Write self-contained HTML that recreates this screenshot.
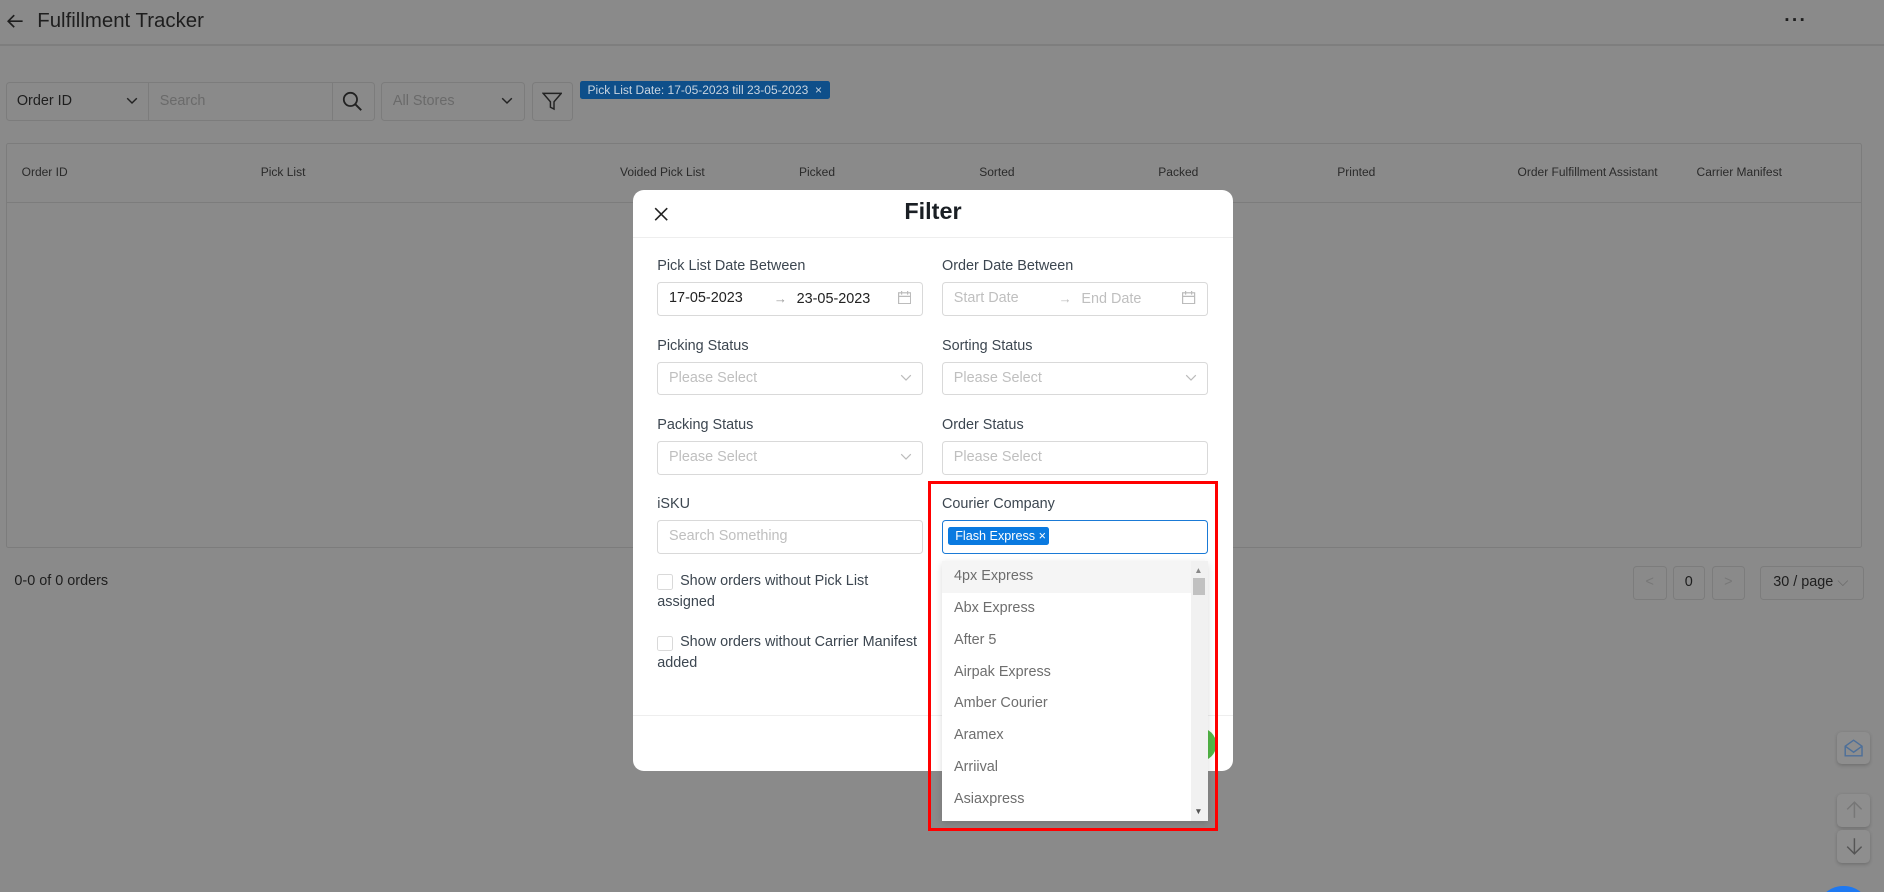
<!DOCTYPE html>
<html><head><meta charset="utf-8"><style>
html,body{margin:0;padding:0;width:1884px;height:891px;overflow:hidden;background:#8a8a8a}
#w{position:absolute;left:0;top:0;width:1568px;height:742px;overflow:hidden;zoom:1.20153;font-family:"Liberation Sans",sans-serif;color:#1e1e1e}
.a{position:absolute}
.bx{position:absolute;border:1px solid #7c7c7c;box-sizing:border-box;border-radius:3px}
.th{position:absolute;top:137px;font-size:10px;color:#2a2a2a}
.lbl{position:absolute;font-size:12px;color:#3c4650}
.in{position:absolute;border:1px solid #d9d9d9;border-radius:3px;box-sizing:border-box;height:28px;background:#fff;font-size:12px;color:#bfbfbf;padding:0 9px;line-height:26px}
.it{height:26.5px;line-height:26.5px;padding-left:10px;font-size:12px;color:#6e6e6e}
</style></head><body><div id="w">
<svg class="a" style="left:6px;top:12px" width="14" height="12" viewBox="0 0 14 12"><path d="M13 6H1.5M6 1L1 6l5 5" fill="none" stroke="#1e1e1e" stroke-width="1.4"/></svg>
<div class="a" style="left:31px;top:8px;font-size:17px;color:#1e1e1e">Fulfillment Tracker</div>
<div class="a" style="left:1485px;top:8px;font-size:16px;font-weight:bold;letter-spacing:1px">···</div>
<div class="a" style="left:0;top:37px;width:1568px;height:1px;background:#7e7e7e"></div>
<div class="bx" style="left:5px;top:68px;width:119px;height:33px;border-radius:3px 0 0 3px"></div>
<div class="a" style="left:14px;top:77px;font-size:12px">Order ID</div>
<svg class="a" style="left:105px;top:81px" width="10" height="7"><path d="M1 1l4 4 4-4" fill="none" stroke="#222" stroke-width="1.2"/></svg>
<div class="bx" style="left:123px;top:68px;width:154px;height:33px;border-radius:0"></div>
<div class="a" style="left:133px;top:77px;font-size:12px;color:#6a6a6a">Search</div>
<div class="bx" style="left:276px;top:68px;width:36px;height:33px;border-radius:0 3px 3px 0"></div>
<svg class="a" style="left:285px;top:76px" width="17" height="17"><circle cx="7" cy="7" r="5.5" fill="none" stroke="#222" stroke-width="1.5"/><path d="M11 11l5 5" stroke="#222" stroke-width="1.6"/></svg>
<div class="bx" style="left:317px;top:68px;width:120px;height:33px"></div>
<div class="a" style="left:327px;top:77px;font-size:12px;color:#6a6a6a">All Stores</div>
<svg class="a" style="left:417px;top:81px" width="10" height="7"><path d="M1 1l4 4 4-4" fill="none" stroke="#222" stroke-width="1.2"/></svg>
<div class="bx" style="left:443px;top:68px;width:34px;height:33px"></div>
<svg class="a" style="left:451px;top:76px" width="17" height="17"><path d="M1 2h15l-6 7v6l-3-1.5V9z" fill="none" stroke="#222" stroke-width="1.2"/></svg>
<div class="a" style="left:483px;top:67px;width:208px;height:15px;background:#0e4f8a;border-radius:2px;color:#c8d4e0;font-size:10px;line-height:15px;padding-left:6px;box-sizing:border-box">Pick List Date: 17-05-2023 till 23-05-2023 &nbsp;×</div>
<div class="bx" style="left:5px;top:119px;width:1545px;height:337px;border-radius:2px"></div>
<div class="a" style="left:5px;top:168px;width:1545px;height:1px;background:#7c7c7c"></div>
<div class="th" style="left:18px">Order ID</div><div class="th" style="left:217px">Pick List</div><div class="th" style="left:516px">Voided Pick List</div><div class="th" style="left:665px">Picked</div><div class="th" style="left:815px">Sorted</div><div class="th" style="left:964px">Packed</div><div class="th" style="left:1113px">Printed</div><div class="th" style="left:1263px">Order Fulfillment Assistant</div><div class="th" style="left:1412px">Carrier Manifest</div>
<div class="a" style="left:12px;top:477px;font-size:12px">0-0 of 0 orders</div>
<div class="bx" style="left:1359px;top:471px;width:28px;height:28px;color:#777;font-size:12px;text-align:center;line-height:26px">&lt;</div>
<div class="bx" style="left:1392px;top:471px;width:27px;height:28px;font-size:12px;text-align:center;line-height:26px">0</div>
<div class="bx" style="left:1425px;top:471px;width:27px;height:28px;color:#777;font-size:12px;text-align:center;line-height:26px">&gt;</div>
<div class="bx" style="left:1465px;top:471px;width:86px;height:28px;font-size:12px;line-height:26px;padding-left:10px">30 / page <span style="color:#666">⌵</span></div>
<div class="a" style="left:1529px;top:609px;width:27px;height:27px;background:#8e8e8e;border-radius:4px;box-shadow:0 1px 3px rgba(0,0,0,.2)"></div>
<svg class="a" style="left:1535px;top:615px" width="16" height="15"><path d="M1 6l7-5 7 5v8H1zM1 6l7 5 7-5" fill="none" stroke="#4d6f99" stroke-width="1.2"/></svg>
<div class="a" style="left:1529px;top:661px;width:27px;height:27px;background:#8e8e8e;border-radius:4px;box-shadow:0 1px 3px rgba(0,0,0,.2)"></div>
<svg class="a" style="left:1536px;top:667px" width="14" height="15"><path d="M7 14V1M1 7l6-6 6 6" fill="none" stroke="#777" stroke-width="1.2"/></svg>
<div class="a" style="left:1529px;top:691px;width:27px;height:27px;background:#8e8e8e;border-radius:4px;box-shadow:0 1px 3px rgba(0,0,0,.2)"></div>
<svg class="a" style="left:1536px;top:697px" width="14" height="15"><path d="M7 1v13M1 8l6 6 6-6" fill="none" stroke="#555" stroke-width="1.2"/></svg>
<div class="a" style="left:1512px;top:737px;width:44px;height:44px;border-radius:50%;background:#1e78f0"></div>
<div class="a" style="left:527px;top:158px;width:499px;height:484px;background:#fff;border-radius:9px"></div>
<svg class="a" style="left:544px;top:172px" width="12" height="12"><path d="M1 1l10 10M11 1L1 11" stroke="#222" stroke-width="1.3"/></svg>
<div class="a" style="left:527px;top:165px;width:499px;text-align:center;font-size:19.5px;font-weight:bold;color:#1a1f24">Filter</div>
<div class="a" style="left:527px;top:197px;width:499px;height:1px;background:#eee"></div>
<div class="a" style="left:527px;top:595px;width:499px;height:1px;background:#eee"></div>
<div class="a" style="left:995px;top:606px;width:17px;height:27px;border-radius:0 13px 13px 0;background:#53b948"></div>
<div class="lbl" style="left:547px;top:215px">Pick List Date Between</div>
<div class="lbl" style="left:784px;top:215px">Order Date Between</div>
<div class="in" style="left:547px;top:235px;width:221px;color:#222">17-05-2023</div>
<div class="a" style="left:644px;top:242px;font-size:11px;color:#999">→</div>
<div class="a" style="left:663px;top:242px;font-size:12px;color:#222">23-05-2023</div>
<svg class="a" style="left:747px;top:242px" width="11" height="11"><rect x="0.5" y="1.5" width="10" height="9" fill="none" stroke="#bbb"/><path d="M0.5 4.5h10M3 0v3M8 0v3" stroke="#bbb"/></svg>
<div class="in" style="left:784px;top:235px;width:221px">Start Date</div>
<div class="a" style="left:881px;top:242px;font-size:11px;color:#bbb">→</div>
<div class="a" style="left:900px;top:242px;font-size:12px;color:#bfbfbf">End Date</div>
<svg class="a" style="left:984px;top:242px" width="11" height="11"><rect x="0.5" y="1.5" width="10" height="9" fill="none" stroke="#bbb"/><path d="M0.5 4.5h10M3 0v3M8 0v3" stroke="#bbb"/></svg>
<div class="lbl" style="left:547px;top:281px">Picking Status</div>
<div class="lbl" style="left:784px;top:281px">Sorting Status</div>
<div class="in" style="left:547px;top:301px;width:221px">Please Select</div>
<div class="in" style="left:784px;top:301px;width:221px">Please Select</div>
<svg class="a" style="left:749px;top:311px" width="10" height="7"><path d="M1 1l4 4 4-4" fill="none" stroke="#bbb"/></svg>
<svg class="a" style="left:986px;top:311px" width="10" height="7"><path d="M1 1l4 4 4-4" fill="none" stroke="#bbb"/></svg>
<div class="lbl" style="left:547px;top:347px">Packing Status</div>
<div class="lbl" style="left:784px;top:347px">Order Status</div>
<div class="in" style="left:547px;top:367px;width:221px">Please Select</div>
<div class="in" style="left:784px;top:367px;width:221px">Please Select</div>
<svg class="a" style="left:749px;top:377px" width="10" height="7"><path d="M1 1l4 4 4-4" fill="none" stroke="#bbb"/></svg>
<div class="lbl" style="left:547px;top:413px">iSKU</div>
<div class="lbl" style="left:784px;top:413px">Courier Company</div>
<div class="in" style="left:547px;top:433px;width:221px">Search Something</div>
<div class="in" style="left:784px;top:433px;width:221px;border-color:#1a7ad6"></div>
<div class="a" style="left:789px;top:439px;width:84px;height:15px;background:#0a7ae0;border-radius:2px;color:#fff;font-size:10.5px;line-height:15px;padding-left:6px;box-sizing:border-box">Flash Express ×</div>
<div class="a" style="left:547px;top:478px;width:13px;height:13px;border:1px solid #d9d9d9;border-radius:2px;box-sizing:border-box"></div>
<div class="lbl" style="left:566px;top:477px">Show orders without Pick List</div>
<div class="lbl" style="left:547px;top:494px">assigned</div>
<div class="a" style="left:547px;top:529px;width:13px;height:13px;border:1px solid #d9d9d9;border-radius:2px;box-sizing:border-box"></div>
<div class="lbl" style="left:566px;top:528px">Show orders without Carrier Manifest</div>
<div class="lbl" style="left:547px;top:545px">added</div>
<div class="a" style="left:784px;top:467px;width:221px;height:216px;background:#fff;box-shadow:0 2px 6px rgba(0,0,0,.15);overflow:hidden">
<div style="width:207px">
<div class="it" style="background:#f5f5f5">4px Express</div><div class="it">Abx Express</div><div class="it">After 5</div><div class="it">Airpak Express</div><div class="it">Amber Courier</div><div class="it">Aramex</div><div class="it">Arriival</div><div class="it">Asiaxpress</div>
</div>
<div class="a" style="left:207px;top:0;width:14px;height:216px;background:#f1f1f1"></div>
<div class="a" style="left:209px;top:14px;width:10px;height:14px;background:#c1c1c1"></div>
<div class="a" style="left:210px;top:3px;font-size:7px;color:#888">▲</div>
<div class="a" style="left:210px;top:204px;font-size:7px;color:#555">▼</div>
</div>
<div class="a" style="left:772px;top:400px;width:242px;height:292px;border:3px solid #ff0000;box-sizing:border-box"></div>
</div></body></html>
